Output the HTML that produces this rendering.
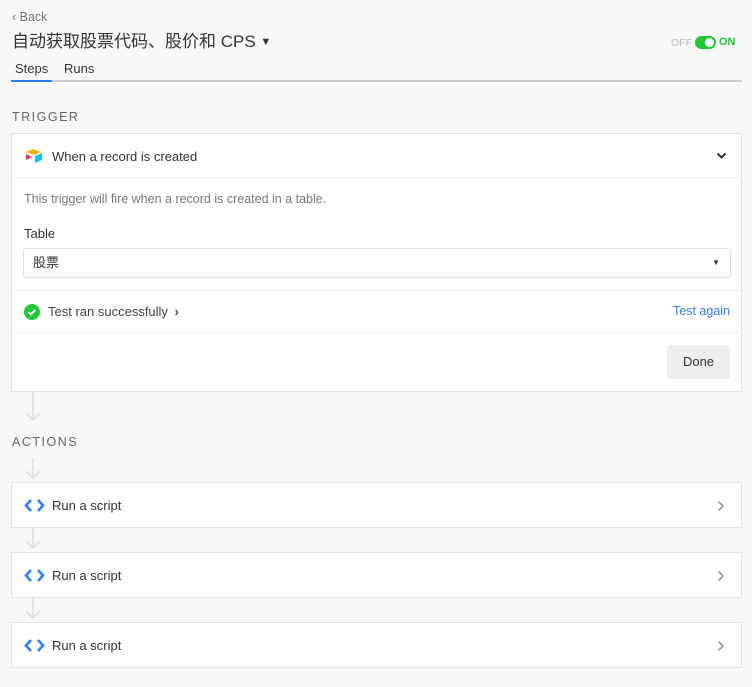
<!DOCTYPE html>
<html><head><meta charset="utf-8"><style>
*{box-sizing:border-box;margin:0;padding:0}
body{width:752px;height:687px;background:#f8f8f8;font-family:"Liberation Sans","Noto Sans CJK SC",sans-serif;color:#333;position:relative;overflow:hidden;font-size:13px}
.a{position:absolute}
.card{position:absolute;left:11px;width:731px;background:#fff;border:1px solid #e2e2e2;border-radius:2px}
.lbl{position:absolute;left:12px;font-size:12.5px;letter-spacing:1.5px;color:#666}
.hr{position:absolute;left:0;right:0;height:1px;background:#eee}
.run{height:46px}
.run .t{position:absolute;left:40px;top:15px;font-size:13px;color:#333}
.chev{position:absolute;right:16px;top:17px}
.arrow{position:absolute;left:24px}
</style></head><body>
<div class="a" style="left:12px;top:10px;font-size:12.5px;color:#777">‹ Back</div>
<div class="a" style="left:12px;top:31px;font-size:17px;line-height:22px;color:#333">自动获取股票代码、股价和 CPS <span style="font-size:11px;position:relative;top:-2px">▼</span></div>
<div class="a" style="left:671px;top:37px;font-size:10.5px;color:#bbb">OFF</div>
<div class="a" style="left:695px;top:36px;width:21px;height:13px;border-radius:7px;background:#20c933"><div class="a" style="right:2px;top:2px;width:9px;height:9px;border-radius:50%;background:#fff"></div></div>
<div class="a" style="left:719px;top:36px;font-size:11px;color:#20c933;font-weight:bold">ON</div>
<div class="a" style="left:15px;top:61px;font-size:13px;color:#333">Steps</div>
<div class="a" style="left:64px;top:61px;font-size:13px;color:#333">Runs</div>
<div class="a" style="left:11px;top:80px;width:731px;height:2px;background:#ccc"></div>
<div class="a" style="left:11px;top:80px;width:41px;height:2px;background:#2d7ff9"></div>
<div class="lbl" style="top:110px">TRIGGER</div>
<div class="card" style="top:133px;height:259px">
 <svg class="a" style="left:13px;top:14px" width="18" height="16" viewBox="0 0 18 16"><path d="M8 1L1 4l8 3 7-3z" fill="#fcb400"/><path d="M10 8v7l7-3V5z" fill="#18bfff"/><path d="M1 6v6l6-3z" fill="#f82b60"/></svg>
 <div class="a" style="left:40px;top:15px">When a record is created</div>
 <svg class="a" style="right:14px;top:18px" width="11" height="8" viewBox="0 0 11 8"><path d="M1.5 1.5l4 4 4-4" stroke="#333" stroke-width="2" fill="none"/></svg>
 <div class="hr" style="top:43px"></div>
 <div class="a" style="left:12px;top:58px;font-size:12.5px;color:#777">This trigger will fire when a record is created in a table.</div>
 <div class="a" style="left:12px;top:92px">Table</div>
 <div class="a" style="left:11px;top:114px;width:708px;height:30px;border:1px solid #ddd;border-radius:3px"><div class="a" style="left:9px;top:6px;font-size:13px;line-height:16px">股票</div><div class="a" style="right:10px;top:9px;font-size:8px">▼</div></div>
 <div class="hr" style="top:156px"></div>
 <svg class="a" style="left:12px;top:170px" width="16" height="16" viewBox="0 0 16 16"><circle cx="8" cy="8" r="8" fill="#20c933"/><path d="M4.5 8.2l2.3 2.2 4.5-4.5" stroke="#fff" stroke-width="2" fill="none"/></svg>
 <div class="a" style="left:36px;top:170px;color:#444">Test ran successfully <span style="font-weight:bold;margin-left:3px">›</span></div>
 <div class="a" style="right:11px;top:170px;color:#2d7ff9;font-size:12.5px">Test again</div>
 <div class="hr" style="top:198px"></div>
 <div class="a" style="left:655px;top:211px;width:63px;height:34px;background:#eee;border-radius:3px;text-align:center;line-height:34px">Done</div>
</div>
<svg class="arrow" style="top:392px" width="18" height="30" viewBox="0 0 18 30"><path d="M9 0v28M2 21l7 7 7-7" stroke="#ddd" stroke-width="1.5" fill="none"/></svg>
<div class="lbl" style="top:435px">ACTIONS</div>
<svg class="arrow" style="top:458px" width="18" height="22" viewBox="0 0 18 22"><path d="M9 0v20M2 13l7 7 7-7" stroke="#ddd" stroke-width="1.5" fill="none"/></svg>
<svg class="arrow" style="top:528px" width="18" height="22" viewBox="0 0 18 22"><path d="M9 0v20M2 13l7 7 7-7" stroke="#ddd" stroke-width="1.5" fill="none"/></svg>
<svg class="arrow" style="top:598px" width="18" height="22" viewBox="0 0 18 22"><path d="M9 0v20M2 13l7 7 7-7" stroke="#ddd" stroke-width="1.5" fill="none"/></svg>
<div class="card run" style="top:482px"><svg class="a" style="left:12px;top:15px" width="21" height="15" viewBox="0 0 21 15"><path d="M7 2L2 7.5 7 13M14 2l5 5.5-5 5.5" stroke="#2d7ff9" stroke-width="2.6" fill="none"/></svg><div class="t">Run a script</div><svg class="chev" width="8" height="12" viewBox="0 0 8 12"><path d="M1.5 1.5l4.5 4.5-4.5 4.5" stroke="#999" stroke-width="1.6" fill="none"/></svg></div>
<div class="card run" style="top:552px"><svg class="a" style="left:12px;top:15px" width="21" height="15" viewBox="0 0 21 15"><path d="M7 2L2 7.5 7 13M14 2l5 5.5-5 5.5" stroke="#2d7ff9" stroke-width="2.6" fill="none"/></svg><div class="t">Run a script</div><svg class="chev" width="8" height="12" viewBox="0 0 8 12"><path d="M1.5 1.5l4.5 4.5-4.5 4.5" stroke="#999" stroke-width="1.6" fill="none"/></svg></div>
<div class="card run" style="top:622px"><svg class="a" style="left:12px;top:15px" width="21" height="15" viewBox="0 0 21 15"><path d="M7 2L2 7.5 7 13M14 2l5 5.5-5 5.5" stroke="#2d7ff9" stroke-width="2.6" fill="none"/></svg><div class="t">Run a script</div><svg class="chev" width="8" height="12" viewBox="0 0 8 12"><path d="M1.5 1.5l4.5 4.5-4.5 4.5" stroke="#999" stroke-width="1.6" fill="none"/></svg></div>
</body></html>
